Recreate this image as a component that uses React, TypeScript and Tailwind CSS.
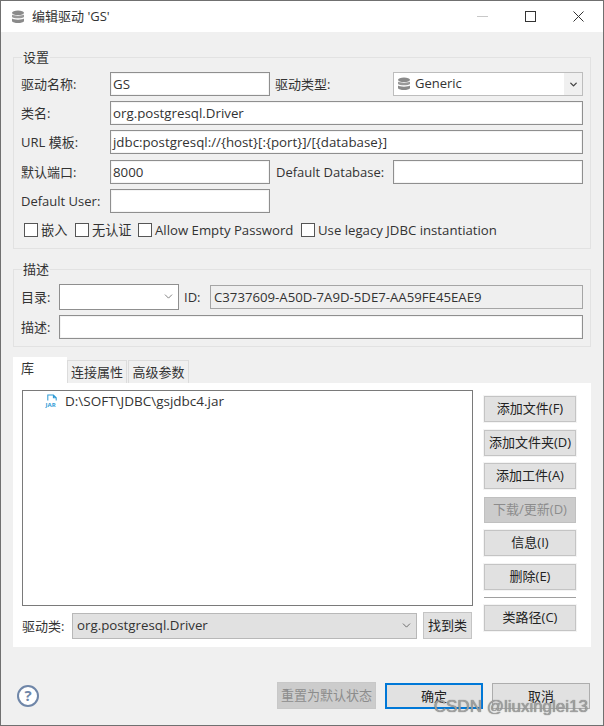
import { ChevronDown } from 'lucide-react'
import type { ReactNode } from 'react'

const font = 'font-["Open_Sans","Noto_Sans_CJK_SC",sans-serif]'
const fieldCls = 'h-6 border border-[#8f8f8f] bg-white px-[2px] text-[13.3px] leading-[22px] text-[#333] shadow-[inset_0_0_0_1px_#f4f4f4]'
const labelCls = 'text-[13px] leading-6 text-[#333]'
const sideBtn = 'h-[26px] w-[92px] border border-[#c4c4c4] bg-[#e1e1e1] text-center text-[13px] leading-[23.5px] text-[#222] outline outline-1 outline-[#f4f4f4]'

function DbIcon({ className }: { className: string }) {
  return (
    <svg viewBox="0.5 0 13 14" className={className}>
      <ellipse cx="7" cy="2.8" rx="6" ry="2.3" fill="#8a8a8a" />
      <path d="M1 4.6c1 1.5 11 1.5 12 0v2.4c-1 1.7-11 1.7-12 0z" fill="#999" />
      <path d="M1 8.6c1 1.5 11 1.5 12 0v2.6c-1 2.4-11 2.4-12 0z" fill="#8a8a8a" />
    </svg>
  )
}

function Check({ label, className }: { label: string; className: string }) {
  return (
    <div className={`flex items-center gap-[3px] ${className}`}>
      <div className="size-[14px] shrink-0 border border-[#555] bg-white" />
      <span className="text-[13.2px] leading-5 text-[#333] whitespace-nowrap">{label}</span>
    </div>
  )
}

function Group({ title, className, children }: { title: string; className: string; children: ReactNode }) {
  return (
    <div className={`relative mx-[12px] border border-[#e2e2e2] ${className}`}>
      <span className="absolute -top-[10px] left-[8px] bg-[#f0f0f0] px-[1px] text-[13px] leading-[18px] text-[#333]">{title}</span>
      {children}
    </div>
  )
}

export default function App() {
  return (
    <div className={`flex h-[726px] w-[604px] flex-col overflow-hidden border border-[#707070] bg-[#f0f0f0] ${font}`}>
      {/* title bar */}
      <div className="flex h-[31px] shrink-0 items-center bg-white pl-[10px]">
        <DbIcon className="size-[14px]" />
        <span className="ml-[7px] text-[13px] text-[#333]">编辑驱动 'GS'</span>
        <svg viewBox="0 0 11 11" className="ml-auto size-[11px]">
          <path d="M0 5.5h11" stroke="#c8c8c8" strokeWidth="1" />
        </svg>
        <svg viewBox="0 0 11 11" className="ml-[37px] size-[11px]">
          <rect x="0.5" y="0.5" width="10" height="10" fill="none" stroke="#333" strokeWidth="1" />
        </svg>
        <svg viewBox="0 0 11 11" className="mr-[19px] ml-[37px] size-[11px]">
          <path d="M0.5 0.5l10 10M10.5 0.5l-10 10" stroke="#333" strokeWidth="1" />
        </svg>
      </div>

      {/* settings */}
      <Group title="设置" className="mt-[25px] h-[192px] pt-[14px] pr-[7px] pl-[7px]">
        <div className="flex h-6">
          <span className={`${labelCls} w-[89px]`}>驱动名称:</span>
          <div className={`${fieldCls} w-[160px]`}>GS</div>
          <span className={`${labelCls} ml-[5px] w-[118px]`}>驱动类型:</span>
          <div className="flex h-6 w-[190px] items-center border border-[#bdbdbd] bg-white pl-[3px]">
            <DbIcon className="size-[14px]" />
            <span className="ml-[4px] text-[13px] text-[#333]">Generic</span>
            <div className="ml-auto flex h-[22px] w-[18px] items-center justify-center bg-[#f0f0f0]">
              <ChevronDown className="size-[11px] text-[#444]" strokeWidth={3} />
            </div>
          </div>
        </div>
        <div className="mt-[5px] flex h-6">
          <span className={`${labelCls} w-[89px]`}>类名:</span>
          <div className={`${fieldCls} flex-1`}>org.postgresql.Driver</div>
        </div>
        <div className="mt-[5px] flex h-6">
          <span className={`${labelCls} w-[89px]`}>URL 模板:</span>
          <div className={`${fieldCls} flex-1 text-[13.1px]`}>{'jdbc:postgresql://{host}[:{port}]/[{database}]'}</div>
        </div>
        <div className="mt-[6px] flex h-6">
          <span className={`${labelCls} w-[89px]`}>默认端口:</span>
          <div className={`${fieldCls} w-[160px]`}>8000</div>
          <span className={`${labelCls} ml-[6px] w-[117px] whitespace-nowrap`}>Default Database:</span>
          <div className={`${fieldCls} w-[190px]`} />
        </div>
        <div className="mt-[5px] flex h-6">
          <span className={`${labelCls} w-[89px]`}>Default User:</span>
          <div className={`${fieldCls} w-[160px]`} />
        </div>
        <div className="mt-[7px] flex h-5 items-center pl-[3px]">
          <Check label="嵌入" className="w-[51px]" />
          <Check label="无认证" className="w-[63px]" />
          <Check label="Allow Empty Password" className="w-[163px]" />
          <Check label="Use legacy JDBC instantiation" className="w-[200px]" />
        </div>
      </Group>

      {/* description */}
      <Group title="描述" className="mt-[20px] h-[78px] pt-[14px] pr-[7px] pl-[7px]">
        <div className="flex h-[25px] items-center">
          <span className={`${labelCls} w-[38px]`}>目录:</span>
          <div className="flex h-[26px] w-[120px] items-center justify-end border border-[#8f8f8f] bg-white pr-[3px]">
            <ChevronDown className="size-[13px] text-[#666]" strokeWidth={1.5} />
          </div>
          <span className={`${labelCls} ml-[5px] w-[26px]`}>ID:</span>
          <div className="h-6 flex-1 border border-[#a5a5a5] bg-[#efefef] px-[3px] text-[13.2px] leading-[22px] text-[#333]">C3737609-A50D-7A9D-5DE7-AA59FE45EAE9</div>
        </div>
        <div className="mt-[6px] flex h-6">
          <span className={`${labelCls} w-[38px]`}>描述:</span>
          <div className={`${fieldCls} flex-1`} />
        </div>
      </Group>

      {/* tabs */}
      <div className="mx-[12px] mt-[10px] flex h-[26px] items-end">
        <div className="h-[26px] w-[54px] bg-white pt-[1px] pl-[8px] text-[13px] leading-5 text-[#333]">库</div>
        <div className="h-[23px] w-[60px] border border-b-0 border-[#dcdcdc] bg-[#f0f0f0] text-center text-[13px] leading-[22px] text-[#333]">连接属性</div>
        <div className="ml-px h-[23px] w-[61px] border border-b-0 border-[#dcdcdc] bg-[#f0f0f0] text-center text-[13px] leading-[22px] text-[#333]">高级参数</div>
      </div>
      <div className="mx-[12px] flex h-[264px] bg-white pt-[7px] pr-[13px] pl-[9px]">
        <div className="flex w-[451px] flex-col">
          <div className="flex h-[216px] items-start border border-[#7a7a7a] pt-[1px] pl-[22px]">
            <svg viewBox="0 0 14 15" className="mt-[2px] size-[14px]">
              <path d="M2.5 7V1h6l3 3v3M8.5 1v3h3" fill="none" stroke="#2e9bd6" strokeWidth="1.1" />
              <text x="0" y="14" fontSize="6.5" fontWeight="700" fill="#2e9bd6">JAR</text>
            </svg>
            <span className="ml-[6px] text-[13.5px] leading-[18px] text-[#333]">D:\SOFT\JDBC\gsjdbc4.jar</span>
          </div>
          <div className="mt-[6px] flex h-[27px] items-center">
            <span className={`${labelCls} w-[50px]`}>驱动类:</span>
            <div className="flex h-[26px] w-[345px] items-center border border-[#b8b8b8] bg-[#e1e1e1] pr-[3px] pl-[4px]">
              <span className="text-[13.3px] text-[#333]">org.postgresql.Driver</span>
              <ChevronDown className="ml-auto size-[13px] text-[#555]" strokeWidth={1.5} />
            </div>
            <div className="ml-[6px] h-[27px] w-[49px] border border-[#c4c4c4] bg-[#e1e1e1] text-center text-[13px] leading-[25px] text-[#222]">找到类</div>
          </div>
        </div>
        <div className="ml-[11px] flex w-[92px] flex-col pt-[6px]">
          <div className={sideBtn}>添加文件(F)</div>
          <div className={`${sideBtn} mt-[8px]`}>添加文件夹(D)</div>
          <div className={`${sideBtn} mt-[7px]`}>添加工件(A)</div>
          <div className="mt-[8px] h-[26px] w-[92px] border border-[#c0c0c0] bg-[#cccccc] text-center text-[13px] leading-[23.5px] text-[#8c8c8c]">下载/更新(D)</div>
          <div className={`${sideBtn} mt-[7px]`}>信息(I)</div>
          <div className={`${sideBtn} mt-[8px]`}>删除(E)</div>
          <div className="mt-[7px] h-px bg-[#a0a0a0]" />
          <div className={`${sideBtn} mt-[7px]`}>类路径(C)</div>
        </div>
      </div>

      {/* footer */}
      <div className="relative mt-[35px] flex h-[27px] items-center pr-[13px] pl-[16px]">
        <div className="flex size-[22px] items-center justify-center rounded-full border-2 border-[#6f86a8] bg-white text-[15px] leading-none font-bold text-[#6f86a8]">?</div>
        <div className="ml-auto h-[27px] w-[99px] border border-[#c8c8c8] bg-[#cccccc] text-center text-[13px] leading-[25px] text-[#8c8c8c]">重置为默认状态</div>
        <div className="ml-[9px] h-[26px] w-[98px] border-2 border-[#0078d7] bg-[#e1e1e1] text-center text-[13px] leading-[22px] text-[#222]">确定</div>
        <div className="ml-[9px] h-[26px] w-[98px] border border-[#adadad] bg-[#e1e1e1] text-center text-[13px] leading-[24px] text-[#222]">取消</div>
        <span className="absolute top-[15px] right-[15px] font-['Liberation_Sans',sans-serif] text-[17px] leading-5 whitespace-nowrap text-[#a0a0a0] [text-shadow:0_0_1px_#666]">CSDN @liuxinglei13</span>
      </div>
    </div>
  )
}
